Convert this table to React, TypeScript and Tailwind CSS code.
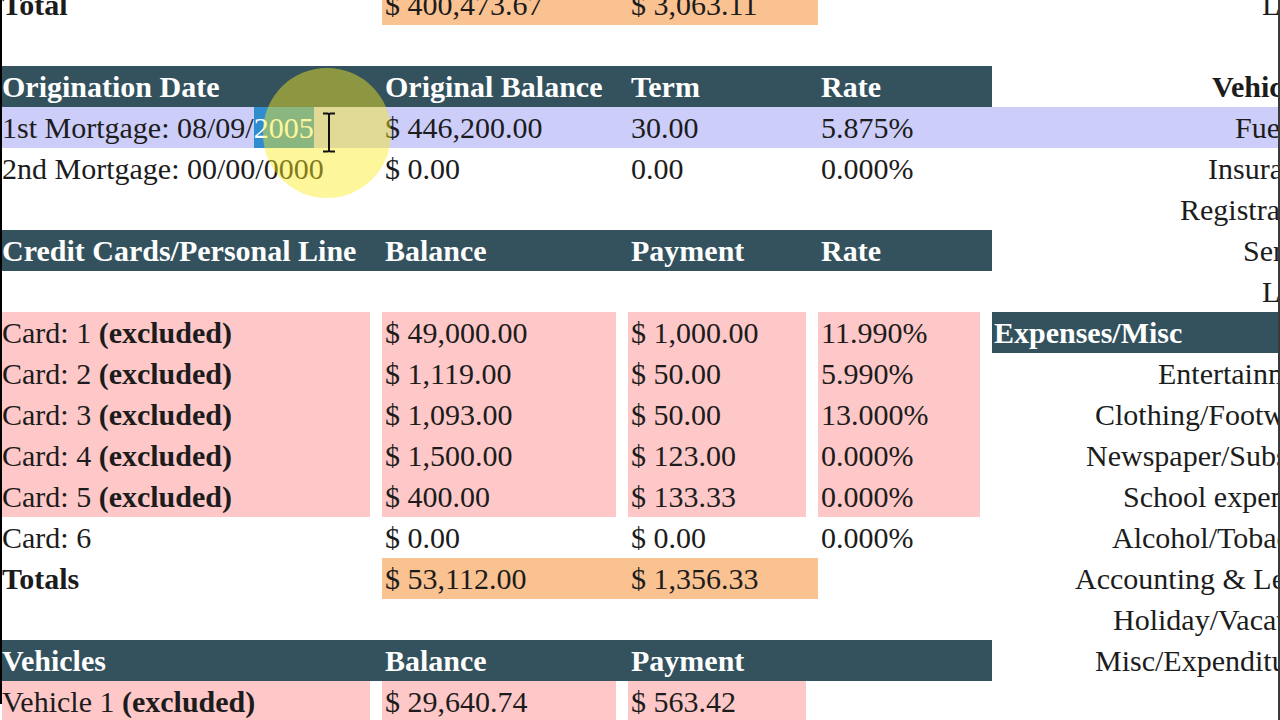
import React from 'react';

const HEAD = 'bg-[#34525e] text-white font-bold';
const PINK = 'bg-[#fec8c8]';
const ORANGE = 'bg-[#fbc291]';

type CellProps = { w: string; fill?: string; pad?: string; children?: React.ReactNode };

const Cell = ({ w, fill = '', pad = 'pl-[3px]', children }: CellProps) => (
    <div className={`${w} h-full shrink-0 pr-[12px]`}>
        <div className={`${fill} ${pad} h-full flex items-center whitespace-nowrap overflow-hidden`}>{children}</div>
    </div>
);

// right column: labels run off the edge of the window
const Side = ({ pad, bold, dark, children }: { pad: string; bold?: boolean; dark?: boolean; children?: React.ReactNode }) => (
    <div className={`w-[286px] h-full shrink-0 overflow-hidden flex items-center whitespace-nowrap ${pad} ${bold ? 'font-bold' : ''} ${dark ? HEAD : ''}`}>
        {children}
    </div>
);

const Row = ({ className = '', children }: { className?: string; children?: React.ReactNode }) => (
    <div className={`flex h-[41px] shrink-0 ${className}`}>{children}</div>
);

const Head = ({ cols }: { cols: string[] }) => (
    <div className={`flex w-[990px] h-full shrink-0 ${HEAD}`}>
        <Cell w="w-[380px]" pad="pl-0">{cols[0]}</Cell>
        <Cell w="w-[246px]">{cols[1]}</Cell>
        <Cell w="w-[190px]">{cols[2]}</Cell>
        <Cell w="w-[174px]">{cols[3]}</Cell>
    </div>
);

const cards = [
    { n: 1, bal: '$ 49,000.00', pay: '$ 1,000.00', rate: '11.990%' },
    { n: 2, bal: '$ 1,119.00', pay: '$ 50.00', rate: '5.990%' },
    { n: 3, bal: '$ 1,093.00', pay: '$ 50.00', rate: '13.000%' },
    { n: 4, bal: '$ 1,500.00', pay: '$ 123.00', rate: '0.000%' },
    { n: 5, bal: '$ 400.00', pay: '$ 133.33', rate: '0.000%' },
];

const cardSide = [
    { pad: 'pl-[166px]', label: 'Entertainment' },
    { pad: 'pl-[103px]', label: 'Clothing/Footwear' },
    { pad: 'pl-[94px]', label: 'Newspaper/Subscriptions' },
    { pad: 'pl-[131px]', label: 'School expenses' },
    { pad: 'pl-[120px]', label: 'Alcohol/Tobacco' },
];

const Totals = ({ label, bal, pay, side }: { label: string; bal: string; pay: string; side: React.ReactNode }) => (
    <Row>
        <Cell w="w-[380px]" pad="pl-0"><span className="font-bold">{label}</span></Cell>
        <div className={`w-[436px] h-full shrink-0 flex items-center whitespace-nowrap ${ORANGE}`}>
            <span className="w-[246px] pl-[3px] shrink-0">{bal}</span>
            <span className="pl-[3px]">{pay}</span>
        </div>
        <div className="w-[174px] h-full shrink-0" />
        {side}
    </Row>
);

const App = () => {
    return (
        <div className="relative w-[1280px] h-[720px] overflow-hidden bg-white text-[30px] text-[#1c1c1c] font-['Liberation_Serif',serif]">
            <div className="flex h-full">
                <div className="w-[1278px] h-full border-l-[2px] border-black flex flex-col mt-[-16px]">
                    <Totals label="Total" bal="$ 400,473.67" pay="$ 3,063.11" side={<Side pad="pl-[270px]">Loan Payment</Side>} />
                    <Row>
                        <div className="w-[990px] shrink-0" />
                        <Side pad="pl-0" />
                    </Row>
                    <Row>
                        <Head cols={['Origination Date', 'Original Balance', 'Term', 'Rate']} />
                        <Side pad="pl-[220px]" bold>Vehicle Expenses</Side>
                    </Row>
                    <Row className="bg-[#cccdf9]">
                        <Cell w="w-[380px]" pad="pl-0">
                            1st Mortgage: 08/09/<span className="bg-[#2f8ccf] text-white">2005</span>
                        </Cell>
                        <Cell w="w-[246px]">$ 446,200.00</Cell>
                        <Cell w="w-[190px]">30.00</Cell>
                        <Cell w="w-[174px]">5.875%</Cell>
                        <Side pad="pl-[243px]">Fuel</Side>
                    </Row>
                    <Row>
                        <Cell w="w-[380px]" pad="pl-0">2nd Mortgage: 00/00/0000</Cell>
                        <Cell w="w-[246px]">$ 0.00</Cell>
                        <Cell w="w-[190px]">0.00</Cell>
                        <Cell w="w-[174px]">0.000%</Cell>
                        <Side pad="pl-[216px]">Insurance</Side>
                    </Row>
                    <Row>
                        <div className="w-[990px] shrink-0" />
                        <Side pad="pl-[188px]">Registration</Side>
                    </Row>
                    <Row>
                        <Head cols={['Credit Cards/Personal Line', 'Balance', 'Payment', 'Rate']} />
                        <Side pad="pl-[251px]">Service</Side>
                    </Row>
                    <Row>
                        <div className="w-[990px] shrink-0" />
                        <Side pad="pl-[270px]">License</Side>
                    </Row>
                    {cards.map((c, i) => (
                        <Row key={c.n}>
                            <Cell w="w-[380px]" fill={PINK} pad="pl-0">
                                Card: {c.n}&nbsp;<span className="font-bold">(excluded)</span>
                            </Cell>
                            <Cell w="w-[246px]" fill={PINK}>{c.bal}</Cell>
                            <Cell w="w-[190px]" fill={PINK}>{c.pay}</Cell>
                            <Cell w="w-[174px]" fill={PINK}>{c.rate}</Cell>
                            {i === 0
                                ? <Side pad="pl-[2px]" dark>Expenses/Misc</Side>
                                : <Side pad={cardSide[i - 1].pad}>{cardSide[i - 1].label}</Side>}
                        </Row>
                    ))}
                    <Row>
                        <Cell w="w-[380px]" pad="pl-0">Card: 6</Cell>
                        <Cell w="w-[246px]">$ 0.00</Cell>
                        <Cell w="w-[190px]">$ 0.00</Cell>
                        <Cell w="w-[174px]">0.000%</Cell>
                        <Side pad={cardSide[4].pad}>{cardSide[4].label}</Side>
                    </Row>
                    <Totals label="Totals" bal="$ 53,112.00" pay="$ 1,356.33" side={<Side pad="pl-[83px]">Accounting &amp; Legal</Side>} />
                    <Row>
                        <div className="w-[990px] shrink-0" />
                        <Side pad="pl-[121px]">Holiday/Vacation</Side>
                    </Row>
                    <Row>
                        <Head cols={['Vehicles', 'Balance', 'Payment', '']} />
                        <Side pad="pl-[103px]">Misc/Expenditures</Side>
                    </Row>
                    <Row>
                        <Cell w="w-[380px]" fill={PINK} pad="pl-0">
                            Vehicle 1&nbsp;<span className="font-bold">(excluded)</span>
                        </Cell>
                        <Cell w="w-[246px]" fill={PINK}>$ 29,640.74</Cell>
                        <Cell w="w-[190px]" fill={PINK}>$ 563.42</Cell>
                        <div className="w-[174px] shrink-0" />
                        <Side pad="pl-0" />
                    </Row>
                </div>
                <div className="w-[2px] h-full bg-[#3a3a3a] shrink-0" />
            </div>

            {/* mouse highlight + text cursor */}
            <div className="absolute left-[263px] top-[68px] w-[128px] h-[130px] rounded-full bg-[rgba(250,235,30,0.45)] pointer-events-none" />
            <svg className="absolute left-[321px] top-[112px]" width="16" height="41" viewBox="0 0 16 41">
                <path d="M2 1.5h4.5q1.5 0 1.5 1.5v35q0 1.5 1.5 1.5H14M14 1.5H9.5Q8 1.5 8 3M8 38q0 1.5-1.5 1.5H2" fill="none" stroke="#111" strokeWidth="2" />
            </svg>
        </div>
    );
};

export default App;
